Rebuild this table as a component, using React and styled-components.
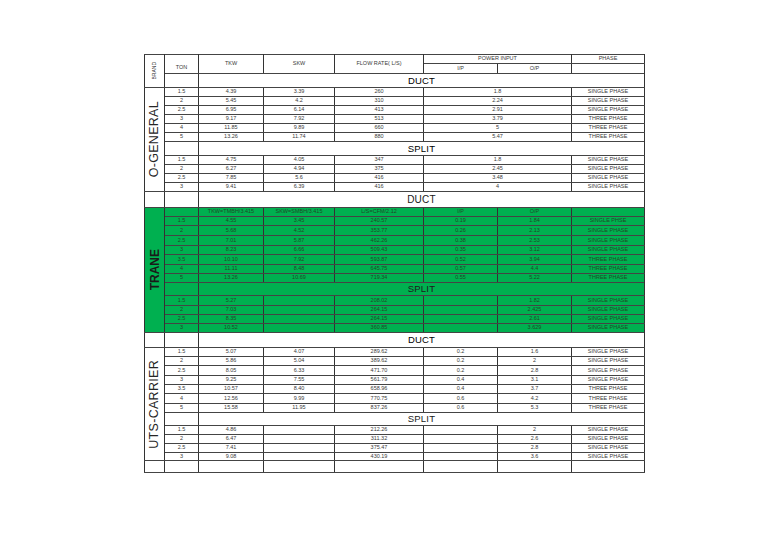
import React from "react";
import styled, { createGlobalStyle, css } from "styled-components";

const GlobalStyle = createGlobalStyle`
  html, body { margin: 0; padding: 0; background: #ffffff; }
  body { font-family: "Liberation Sans", Arial, sans-serif; }
`;

const Page = styled.div`
  padding: 54px 0 0 144px;
`;

const Sheet = styled.table`
  border-collapse: collapse;
  table-layout: fixed;
  width: 500px;
  color: #3a3a3a;
`;

const Row = styled.tr`
  height: ${(p) => p.$h}px;
  background: ${(p) => (p.$green ? "#00b050" : "#ffffff")};
  color: ${(p) => (p.$green ? "#1f4a26" : "#3a3a3a")};
`;

const Cell = styled.td`
  padding: 0;
  border-top: 1px solid #444;
  border-bottom: 1px solid #444;
  border-left: 1.5px solid #333;
  border-right: 1.5px solid #333;
  font-size: 5.5px;
  line-height: 1;
  text-align: center;
  vertical-align: ${(p) => p.$valign || "middle"};
  white-space: nowrap;
  overflow: hidden;
  ${(p) =>
    p.$pb &&
    css`
      padding-bottom: ${p.$pb}px;
    `}
`;

const SectionCell = styled(Cell)`
  font-size: ${(p) => p.$size || 9.5}px;
  font-weight: 400;
  color: ${(p) => (p.$dark ? "#000" : "#1a1a1a")};
  letter-spacing: 0.2px;
`;

const BrandCell = styled(Cell)`
  background: ${(p) => (p.$green ? "#00b050" : "#ffffff")};
`;

const BrandText = styled.div`
  writing-mode: vertical-rl;
  transform: rotate(180deg);
  margin: 0 auto;
  font-size: ${(p) => p.$size}px;
  font-weight: ${(p) => (p.$bold ? 700 : 400)};
  color: ${(p) => (p.$bold ? "#1a1a1a" : "#262626")};
  letter-spacing: ${(p) => p.$ls || 0}px;
  line-height: 1;
`;

const COLS = [20, 34, 65, 71, 89, 74, 74, 73];

const S = "SINGLE PHASE";
const T = "THREE PHASE";

const ogDuct = [
  ["1.5", "4.39", "3.39", "260", "1.8", S],
  ["2", "5.45", "4.2", "310", "2.24", S],
  ["2.5", "6.95", "6.14", "413", "2.91", S],
  ["3", "9.17", "7.92", "513", "3.79", T],
  ["4", "11.85", "9.89", "660", "5", T],
  ["5", "13.26", "11.74", "880", "5.47", T],
];
const ogSplit = [
  ["1.5", "4.75", "4.05", "347", "1.8", S],
  ["2", "6.27", "4.94", "375", "2.45", S],
  ["2.5", "7.85", "5.6", "416", "3.48", S],
  ["3", "9.41", "6.39", "416", "4", S],
];
const traneDuct = [
  ["1.5", "4.55", "3.45", "240.57", "0.19", "1.84", "SINGLE PHSE"],
  ["2", "5.68", "4.52", "353.77", "0.26", "2.13", S],
  ["2.5", "7.01", "5.87", "462.26", "0.38", "2.53", S],
  ["3", "8.23", "6.66", "509.43", "0.35", "3.12", S],
  ["3.5", "10.10", "7.92", "593.87", "0.52", "3.94", T],
  ["4", "11.11", "8.48", "645.75", "0.57", "4.4", T],
  ["5", "13.26", "10.69", "719.34", "0.55", "5.22", T],
];
const traneSplit = [
  ["1.5", "5.27", "", "208.02", "", "1.82", S],
  ["2", "7.03", "", "264.15", "", "2.425", S],
  ["2.5", "8.35", "", "264.15", "", "2.61", S],
  ["3", "10.52", "", "360.85", "", "3.629", S],
];
const utsDuct = [
  ["1.5", "5.07", "4.07", "289.62", "0.2", "1.6", S],
  ["2", "5.86", "5.04", "389.62", "0.2", "2", S],
  ["2.5", "8.05", "6.33", "471.70", "0.2", "2.8", S],
  ["3", "9.25", "7.55", "561.79", "0.4", "3.1", S],
  ["3.5", "10.57", "8.40", "658.96", "0.4", "3.7", T],
  ["4", "12.56", "9.99", "770.75", "0.6", "4.2", T],
  ["5", "15.58", "11.95", "837.26", "0.6", "5.3", T],
];
const utsSplit = [
  ["1.5", "4.86", "", "212.26", "", "2", S],
  ["2", "6.47", "", "311.32", "", "2.6", S],
  ["2.5", "7.41", "", "375.47", "", "2.8", S],
  ["3", "9.08", "", "430.19", "", "3.6", S],
];

const traneDuctH = [9, 10, 10, 9, 10, 9, 9];
const traneSplitH = [10, 9, 9, 9];
const utsDuctH = [9, 9, 10, 9, 9, 10, 9];
const utsSplitH = [9, 9, 9, 8];

function MergedPowerRow({ r, brand, h }) {
  return (
    <Row $h={h}>
      {brand}
      <Cell>{r[0]}</Cell>
      <Cell>{r[1]}</Cell>
      <Cell>{r[2]}</Cell>
      <Cell>{r[3]}</Cell>
      <Cell colSpan={2}>{r[4]}</Cell>
      <Cell>{r[5]}</Cell>
    </Row>
  );
}

function FullRow({ r, brand, h, green }) {
  return (
    <Row $h={h} $green={green}>
      {brand}
      {r.map((v, i) => (
        <Cell key={i}>{v}</Cell>
      ))}
    </Row>
  );
}

function SectionRow({ label, h, green, brandEmpty, size, dark }) {
  return (
    <Row $h={h} $green={green}>
      {brandEmpty && <BrandCell />}
      <Cell />
      <SectionCell colSpan={7} $size={size} $dark={dark}>
        {label}
      </SectionCell>
    </Row>
  );
}

export default function App() {
  return (
    <Page>
      <GlobalStyle />
      <Sheet>
        <colgroup>
          {COLS.map((w, i) => (
            <col key={i} style={{ width: w }} />
          ))}
        </colgroup>
        <tbody>
          <Row $h={9}>
            <BrandCell rowSpan={3}>
              <BrandText $size={5}>BRAND</BrandText>
            </BrandCell>
            <Cell rowSpan={2} $valign="bottom" $pb={3}>TON</Cell>
            <Cell rowSpan={2}>TKW</Cell>
            <Cell rowSpan={2}>SKW</Cell>
            <Cell rowSpan={2}>FLOW RATE( L/S)</Cell>
            <Cell colSpan={2}>POWER INPUT</Cell>
            <Cell>PHASE</Cell>
          </Row>
          <Row $h={10}>
            <Cell>I/P</Cell>
            <Cell>O/P</Cell>
            <Cell />
          </Row>
          <SectionRow label="DUCT" h={14} dark />

          {ogDuct.map((r, i) => (
            <MergedPowerRow
              key={"od" + i}
              r={r}
              h={9}
              brand={
                i === 0 ? (
                  <BrandCell rowSpan={11}>
                    <BrandText $size={12.5} $ls={0.3}>O-GENERAL</BrandText>
                  </BrandCell>
                ) : null
              }
            />
          ))}
          <SectionRow label="SPLIT" h={14} dark />
          {ogSplit.map((r, i) => (
            <MergedPowerRow key={"os" + i} r={r} h={9} />
          ))}

          <SectionRow label="DUCT" h={16} brandEmpty size={10} />

          <Row $h={9} $green>
            <BrandCell rowSpan={13} $green>
              <BrandText $size={12} $bold>TRANE</BrandText>
            </BrandCell>
            <Cell />
            <Cell>TKW=TMBH/3.415</Cell>
            <Cell>SKW=SMBH/3.415</Cell>
            <Cell>L/S=CFM/2.12</Cell>
            <Cell>I/P</Cell>
            <Cell>O/P</Cell>
            <Cell />
          </Row>
          {traneDuct.map((r, i) => (
            <FullRow key={"td" + i} r={r} h={traneDuctH[i]} green />
          ))}
          <SectionRow label="SPLIT" h={13} green />
          {traneSplit.map((r, i) => (
            <FullRow key={"ts" + i} r={r} h={traneSplitH[i]} green />
          ))}

          <SectionRow label="DUCT" h={15} brandEmpty dark />

          {utsDuct.map((r, i) => (
            <FullRow
              key={"ud" + i}
              r={r}
              h={utsDuctH[i]}
              brand={
                i === 0 ? (
                  <BrandCell rowSpan={12}>
                    <BrandText $size={12.5} $ls={0.3}>UTS-CARRIER</BrandText>
                  </BrandCell>
                ) : null
              }
            />
          ))}
          <SectionRow label="SPLIT" h={13} />
          {utsSplit.map((r, i) => (
            <FullRow key={"us" + i} r={r} h={utsSplitH[i]} />
          ))}

          <Row $h={12}>
            {COLS.map((_, i) => (
              <Cell key={i} />
            ))}
          </Row>
        </tbody>
      </Sheet>
    </Page>
  );
}
